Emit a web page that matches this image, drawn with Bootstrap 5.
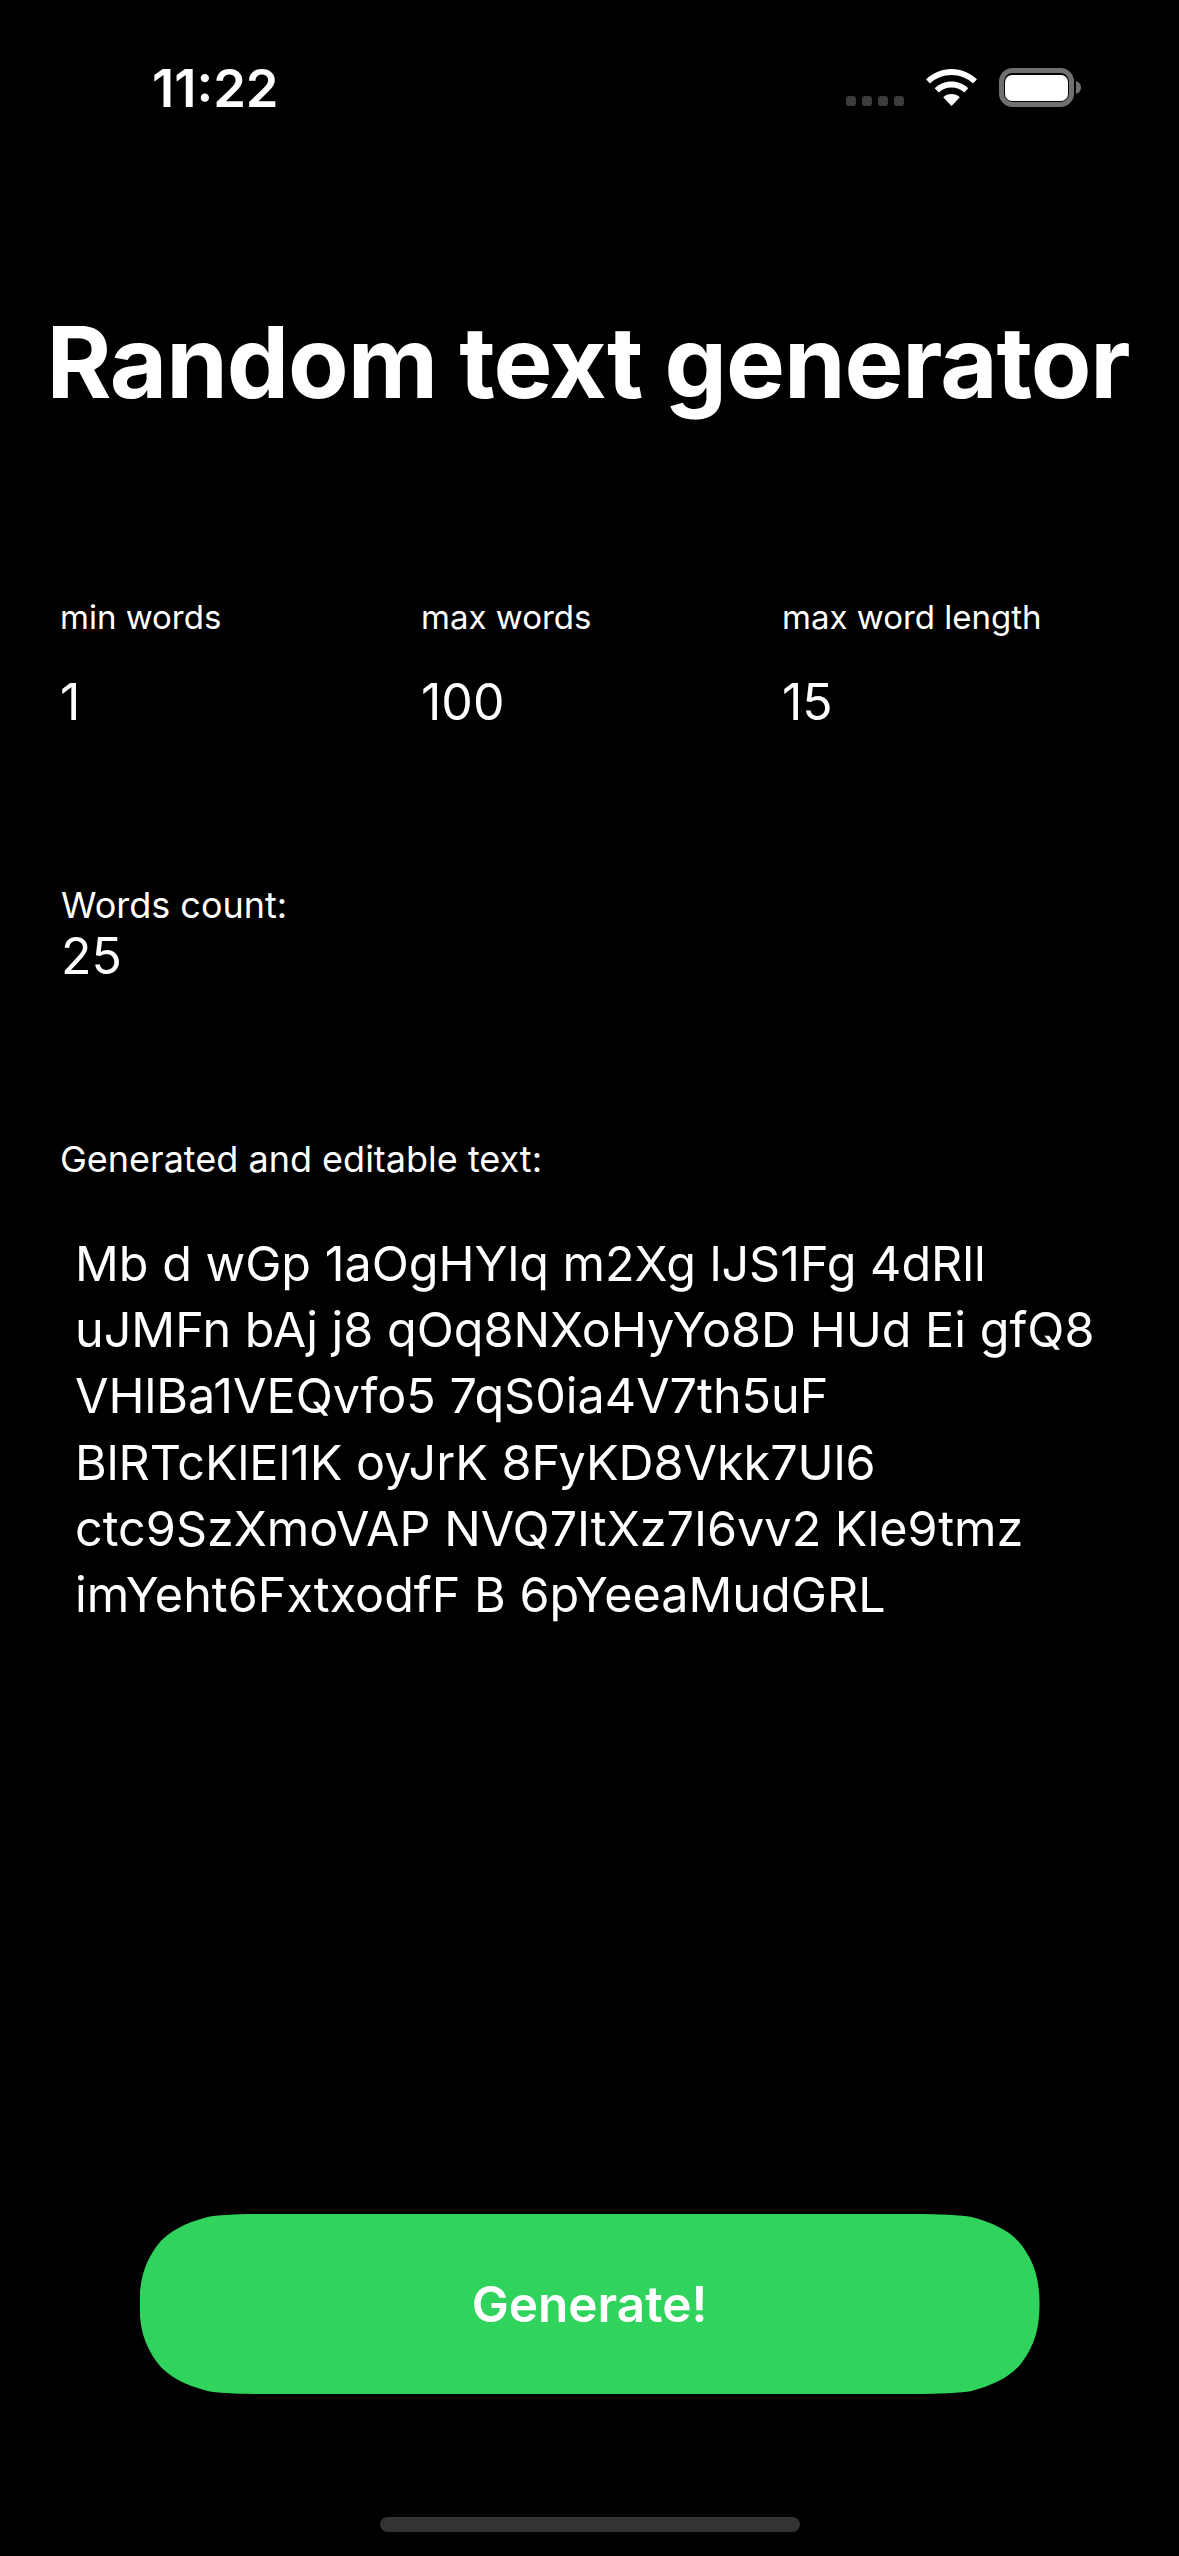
<!DOCTYPE html>
<html lang="en">
<head>
<meta charset="utf-8">
<title>Random text generator</title>
<link href="https://cdn.jsdelivr.net/npm/bootstrap@5.3.0/dist/css/bootstrap.min.css" rel="stylesheet">
<style>
html,body{background:#000;margin:0}
body{width:1179px;height:2556px;color:#fff;font-family:Inter,"Liberation Sans",sans-serif;overflow:hidden}
.screen{height:2556px;position:relative}
.status{height:176px;padding:62px 98px 0 152px}
.clock{font-size:52.5px;font-weight:600;line-height:52px}
.sig-dots{gap:6px;margin-top:34px;margin-right:22px}
.sig-dots i{display:block;width:10px;height:10px;border-radius:3px;background:#3c3c3c}
.wifi-ic{margin-top:7px;margin-right:22px}
.batt-ic{margin-top:6px}
.app-title{font-size:99px;font-weight:700;line-height:120px;margin:0;padding:126px 3px 0 0;text-align:center;letter-spacing:-1.1px}
.params{padding:0 36px 0 60px;margin-top:175px}
.lbl{font-size:33px;font-weight:400;line-height:40px}
.lbl-lg{font-size:36px}
.val{font-size:50px;font-weight:400;line-height:62px}
.param-val{margin-top:34px}
.count{padding-left:61px;margin-top:152px}
.gen{padding-left:60px;margin-top:152px}
.gen-text{padding:0 40px 0 75px;margin-top:52px;font-size:48.5px;font-weight:400;line-height:66.2px;white-space:pre-line}
.go-btn,.go-btn:hover,.go-btn:active{width:900px;height:180px;background:#30d35c;color:#fff;font-size:49.5px;font-weight:600;border:0;border-radius:0;padding:0;
clip-path:path("M125 0 L775 0 C800 0 822 1 832 3 C855 9 872 18 882 31 C892 45 900 60 900 90 C900 120 892 135 882 149 C872 162 855 171 832 177 C822 179 800 180 775 180 L125 180 C100 180 78 179 68 177 C45 171 28 162 18 149 C8 135 0 120 0 90 C0 60 8 45 18 31 C28 18 45 9 68 3 C78 1 100 0 125 0 Z")}
.go-wrap{position:absolute;left:0;right:0;top:2214px}
.home{position:absolute;left:380px;top:2517px;width:420px;height:15px;border-radius:8px;background:#333}
</style>
</head>
<body>
<div class="screen">
  <div class="status d-flex justify-content-between align-items-start">
    <div class="clock">11:22</div>
    <div class="d-flex align-items-start">
      <div class="sig-dots d-flex"><i></i><i></i><i></i><i></i></div>
      <svg class="wifi-ic" width="51" height="37" viewBox="0 0 51 37"><path fill="#fff" d="M25.5 0C16 0 7 3.700 0 10.300l4 4.200C9.800 9 17.400 6 25.500 6S41.200 9 47 14.500l4-4.200C44 3.700 35 0 25.500 0Z"/><path fill="#fff" d="M25.500 12.500c-6.300 0-12.200 2.400-16.800 6.700l4.100 4.200c3.400-3.200 7.900-5 12.700-5s9.300 1.800 12.700 5l4.100-4.200c-4.600-4.300-10.500-6.700-16.800-6.700Z"/><path fill="#fff" d="M25.500 25c-3.100 0-6 1.200-8.300 3.200L25.500 37l8.300-8.800c-2.300-2-5.200-3.200-8.300-3.200Z"/></svg>
      <svg class="batt-ic" width="82" height="39" viewBox="0 0 82 39"><rect x="2.500" y="2.500" width="70" height="34" rx="11" fill="none" stroke="#707070" stroke-width="5"/><rect x="6" y="7" width="63" height="26" rx="7" fill="#fff"/><path fill="#707070" d="M77 13c2.800.8 5 3.500 5 6.500s-2.200 5.700-5 6.500Z"/></svg>
    </div>
  </div>
  <h1 class="app-title">Random text generator</h1>
  <div class="params row g-0">
    <div class="col-4"><div class="lbl">min words</div><div class="val param-val">1</div></div>
    <div class="col-4"><div class="lbl">max words</div><div class="val param-val">100</div></div>
    <div class="col-4"><div class="lbl">max word length</div><div class="val param-val">15</div></div>
  </div>
  <div class="count">
    <div class="lbl lbl-lg">Words count:</div>
    <div class="val">25</div>
  </div>
  <div class="gen lbl lbl-lg">Generated and editable text:</div>
  <div class="gen-text">Mb d wGp 1aOgHYlq m2Xg lJS1Fg 4dRll
uJMFn bAj j8 qOq8NXoHyYo8D HUd Ei gfQ8
VHlBa1VEQvfo5 7qS0ia4V7th5uF
BlRTcKlEl1K oyJrK 8FyKD8Vkk7Ul6
ctc9SzXmoVAP NVQ7ItXz7I6vv2 Kle9tmz
imYeht6FxtxodfF B 6pYeeaMudGRL</div>
  <div class="go-wrap d-flex justify-content-center"><button type="button" class="btn go-btn">Generate!</button></div>
  <div class="home"></div>
</div>
<script src="https://cdn.jsdelivr.net/npm/bootstrap@5.3.0/dist/js/bootstrap.bundle.min.js"></script>
</body>
</html>
